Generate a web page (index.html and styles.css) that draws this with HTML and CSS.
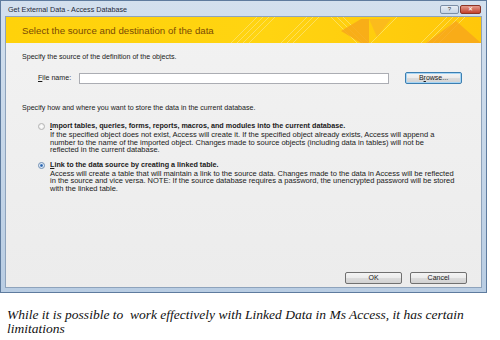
FILE: index.html
```html
<!DOCTYPE html>
<html>
<head>
<meta charset="utf-8">
<link rel="stylesheet" href="styles.css">
</head>
<body>
<div class="dialog">
  <div class="titlebar">
    <span class="title">Get External Data - Access Database</span>
    <div class="tbtns">
      <span class="tbtn help">?</span>
      <span class="tbtn close">✕</span>
    </div>
  </div>
  <div class="client">
    <div class="banner">
      <span class="banner-text">Select the source and destination of the data</span>
      <svg class="deco" width="260" height="26" viewBox="0 0 260 26">
        <g stroke="#fde57a" stroke-width="0.8" fill="none" opacity="0.9">
          <line x1="10" y1="26" x2="36" y2="0"/>
          <line x1="16" y1="26" x2="42" y2="0"/>
          <line x1="22" y1="26" x2="48" y2="0"/>
          <line x1="28" y1="26" x2="54" y2="0"/>
          <line x1="60" y1="26" x2="86" y2="0"/>
          <line x1="66" y1="26" x2="92" y2="0"/>
          <line x1="72" y1="26" x2="98" y2="0"/>
          <line x1="110" y1="0" x2="136" y2="26"/>
          <line x1="116" y1="0" x2="142" y2="26"/>
          <line x1="122" y1="0" x2="148" y2="26"/>
          <line x1="150" y1="26" x2="176" y2="0"/>
          <line x1="200" y1="26" x2="226" y2="0"/>
          <line x1="206" y1="26" x2="232" y2="0"/>
          <line x1="212" y1="26" x2="238" y2="0"/>
          <line x1="218" y1="26" x2="244" y2="0"/>
        </g>
        <polygon points="120,14 140,2 148,2 148,26 140,26" fill="#f7a81a" opacity="0.85"/>
        <polygon points="148,2 170,2 156,20" fill="#f9b323" opacity="0.7"/>
        <polygon points="205,26 235,4 260,26" fill="#f7a51c" opacity="0.8"/>
      </svg>
    </div>
    <div class="content">
      <p class="line sect">Specify the source of the definition of the objects.</p>
      <div class="filerow">
        <span class="label"><u>F</u>ile name:</span>
        <span class="input"></span>
        <span class="btn browse">B<u>r</u>owse...</span>
      </div>
      <p class="line sect2">Specify how and where you want to store the data in the current database.</p>
      <div class="opt opt1">
        <span class="radio"></span>
        <div class="opttext">
          <p class="line bold"><u>I</u>mport tables, queries, forms, reports, macros, and modules into the current database.</p>
          <p class="line desc">If the specified object does not exist, Access will create it. If the specified object already exists, Access will append a<br>number to the name of the imported object. Changes made to source objects (including data in tables) will not be<br>reflected in the current database.</p>
        </div>
      </div>
      <div class="opt opt2">
        <span class="radio checked"></span>
        <div class="opttext">
          <p class="line bold"><u>L</u>ink to the data source by creating a linked table.</p>
          <p class="line desc">Access will create a table that will maintain a link to the source data. Changes made to the data in Access will be reflected<br>in the source and vice versa. NOTE:  If the source database requires a password, the unencrypted password will be stored<br>with the linked table.</p>
        </div>
      </div>
      <div class="footer">
        <span class="btn">OK</span>
        <span class="btn">Cancel</span>
      </div>
    </div>
  </div>
</div>
<p class="caption">While it is possible to&nbsp; work effectively with Linked Data in Ms Access, it has certain<br>limitations</p>
</body>
</html>
```

FILE: styles.css
```css
html, body {
  margin: 0;
  padding: 0;
  background: #ffffff;
}
body {
  width: 500px;
  height: 340px;
  overflow: hidden;
  font-family: "Liberation Sans", Arial, sans-serif;
}
.dialog {
  width: 487px;
  height: 293px;
  box-sizing: border-box;
  border: 1px solid #5e7b9e;
  background: linear-gradient(#d3e0ee, #b9cde3);
  padding: 0 4px 4px 4px;
  display: flex;
  flex-direction: column;
}
.titlebar {
  height: 15px;
  flex: none;
  display: flex;
  align-items: center;
  justify-content: space-between;
}
.title {
  font-size: 7.2px;
  color: #1e2a3a;
  padding-left: 3px;
  padding-top: 1px;
}
.tbtns {
  display: flex;
  gap: 1px;
  padding-right: 1px;
  align-self: flex-start;
  padding-top: 4px;
}
.tbtn {
  height: 9px;
  box-sizing: border-box;
  border: 1px solid #7b8ea6;
  border-radius: 2px;
  font-size: 6px;
  line-height: 7px;
  text-align: center;
  color: #333;
}
.help {
  width: 19px;
  background: linear-gradient(#e8eef6, #c5d3e4);
}
.close {
  width: 21px;
  background: linear-gradient(#e49a8c, #c3402c);
  border-color: #8b3426;
  color: #fff;
}
.client {
  flex: 1;
  background: linear-gradient(#f2f2f2, #ececec);
  border: 1px solid #8ea3bc;
  display: flex;
  flex-direction: column;
  min-height: 0;
}
.banner {
  height: 26px;
  flex: none;
  background: linear-gradient(90deg, #ffd20a 0%, #ffd411 55%, #ffc70a 100%);
  display: flex;
  align-items: center;
  position: relative;
  overflow: hidden;
}
.banner-text {
  font-size: 9.7px;
  color: #7a4b05;
  padding-left: 16px;
  position: relative;
}
.deco {
  position: absolute;
  right: 0;
  top: 0;
}
.content {
  flex: 1;
  display: flex;
  flex-direction: column;
  padding: 0 14px 3px 16px;
  min-height: 0;
}
.line {
  margin: 0;
  font-size: 7.1px;
  line-height: 8px;
  color: #1a1a1a;
  white-space: nowrap;
}
.sect {
  margin-top: 10px;
}
.filerow {
  display: flex;
  align-items: center;
  margin-top: 11px;
  height: 12px;
}
.label {
  font-size: 7.1px;
  color: #1a1a1a;
  margin-left: 16px;
  width: 41px;
}
.input {
  width: 310px;
  height: 11px;
  box-sizing: border-box;
  background: #fff;
  border: 1px solid #abadb3;
}
.btn {
  width: 57px;
  height: 12px;
  box-sizing: border-box;
  border: 1px solid #707070;
  border-radius: 2px;
  background: linear-gradient(#f4f4f4 0%, #ebebeb 50%, #dcdcdc 51%, #d2d2d2 100%);
  font-size: 7px;
  line-height: 10px;
  text-align: center;
  color: #1a1a1a;
}
.browse {
  margin-left: 16px;
  border-color: #3c7fb1;
  box-shadow: inset 0 0 0 1px #a6d5f5;
}
.sect2 {
  margin-top: 20px;
}
.opt {
  display: flex;
  align-items: flex-start;
  margin-left: 16px;
}
.opt1 {
  margin-top: 10px;
}
.opt2 {
  margin-top: 7px;
}
.radio {
  width: 7px;
  height: 7px;
  box-sizing: border-box;
  border-radius: 50%;
  border: 1px solid #b4b4b4;
  background: radial-gradient(circle, #ffffff 0, #e6e6e6 100%);
  margin-top: 1px;
  margin-right: 5px;
  flex: none;
}
.radio.checked {
  border-color: #6f8fb5;
  background: radial-gradient(circle, #2a5ea8 0, #4f86c6 35%, #dbe6f3 45%, #f3f6fa 100%);
}
.bold {
  font-weight: bold;
  font-size: 7.2px;
}
.desc {
  margin-top: 1px;
  font-size: 7.5px;
  line-height: 7.5px;
}
.footer {
  margin-top: auto;
  display: flex;
  justify-content: flex-end;
  gap: 8px;
}
.caption {
  margin: 15px 0 0 7px;
  font-family: "Liberation Serif", serif;
  font-style: italic;
  font-size: 13.5px;
  line-height: 14px;
  color: #111;
}
```
